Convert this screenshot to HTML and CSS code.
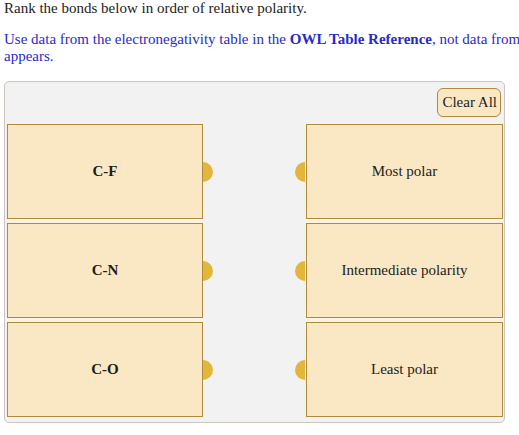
FILE: index.html
```html
<!DOCTYPE html>
<html>
<head>
<meta charset="utf-8">
<link rel="stylesheet" href="styles.css">
</head>
<body>
<p class="intro">Rank the bonds below in order of relative polarity.</p>
<p class="note">Use data from the electronegativity table in the <b>OWL Table Reference</b>, not data from<br>appears.</p>
<div class="panel">
  <div class="toolbar"><button class="clear">Clear All</button></div>
  <div class="board">
    <div class="column items">
      <div class="card item"><b>C-F</b></div>
      <div class="card item"><b>C-N</b></div>
      <div class="card item"><b>C-O</b></div>
    </div>
    <div class="spacer"></div>
    <div class="column slots">
      <div class="card slot">Most polar</div>
      <div class="card slot">Intermediate polarity</div>
      <div class="card slot">Least polar</div>
    </div>
  </div>
</div>
</body>
</html>
```
FILE: styles.css
```css
html, body {
  margin: 0;
  padding: 0;
  overflow: hidden;
}
body {
  padding: 0 4px;
  font-family: "Liberation Serif", Tinos, "Times New Roman", Times, "Nimbus Roman", "DejaVu Serif", serif;
  font-size: 15px;
  line-height: 17px;
  color: #1c1c1c;
  background: #ffffff;
}
p {
  margin: 0;
}
.intro {
  margin-bottom: 14px;
}
.note {
  color: #2a2acb;
  white-space: nowrap;
}
.note b {
  font-weight: bold;
}
.panel {
  margin-top: 16px;
  width: 501px;
  box-sizing: border-box;
  border: 1px solid #cbc5bd;
  border-radius: 5px;
  background: #f2f2f2;
  padding: 6px 1px 5px 2px;
}
.toolbar {
  display: flex;
  justify-content: flex-end;
  padding-right: 2px;
  margin-bottom: 7px;
}
.clear {
  font: inherit;
  color: #1c1c1c;
  background: #fae8c5;
  border: 1px solid #b08b3c;
  border-radius: 6px;
  padding: 5px 3px 5px 4px;
  margin: 0;
}
.board {
  display: grid;
  grid-template-columns: 196px 1fr 197px;
}
.column {
  display: flex;
  flex-direction: column;
  gap: 4px;
  background: #fcf3e2;
}
.card {
  position: relative;
  box-sizing: border-box;
  height: 95px;
  border: 1px solid #b08b3c;
  background: #fae8c5;
  display: flex;
  align-items: center;
  justify-content: center;
  text-align: center;
  color: #1c1c1c;
}
.item::after,
.slot::before {
  content: "";
  position: absolute;
  top: 50%;
  width: 10px;
  height: 20px;
  margin-top: -10px;
  background: #e1b63a;
}
.item::after {
  left: calc(100% + 1px);
  border-radius: 0 10px 10px 0;
}
.slot::before {
  right: calc(100% + 2px);
  border-radius: 10px 0 0 10px;
}
```
